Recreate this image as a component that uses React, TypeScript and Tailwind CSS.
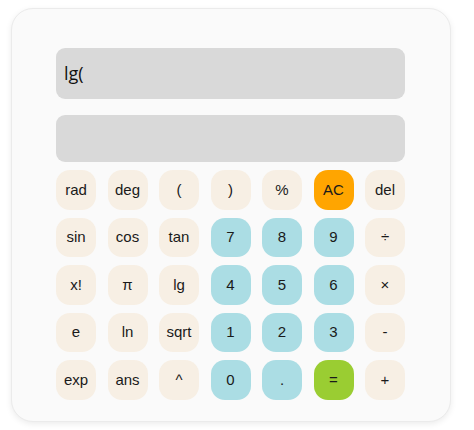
import React from 'react';

type Kind = 'fn' | 'num' | 'ac' | 'eq';

const KEYS: [string, Kind][] = [
  ['rad', 'fn'], ['deg', 'fn'], ['(', 'fn'], [')', 'fn'], ['%', 'fn'], ['AC', 'ac'], ['del', 'fn'],
  ['sin', 'fn'], ['cos', 'fn'], ['tan', 'fn'], ['7', 'num'], ['8', 'num'], ['9', 'num'], ['÷', 'fn'],
  ['x!', 'fn'], ['π', 'fn'], ['lg', 'fn'], ['4', 'num'], ['5', 'num'], ['6', 'num'], ['×', 'fn'],
  ['e', 'fn'], ['ln', 'fn'], ['sqrt', 'fn'], ['1', 'num'], ['2', 'num'], ['3', 'num'], ['-', 'fn'],
  ['exp', 'fn'], ['ans', 'fn'], ['^', 'fn'], ['0', 'num'], ['.', 'num'], ['=', 'eq'], ['+', 'fn'],
];

const KIND_CLASS: Record<Kind, string> = {
  fn: 'bg-[#f7efe4]',
  num: 'bg-[#abdde4]',
  ac: 'bg-[#ffa500]',
  eq: 'bg-[#9acd32]',
};

export default function App() {
  return (
    <div className="w-[474px] h-[430px] bg-white pt-2 pl-[11px]">
      <div className="w-[440px] h-[414px] rounded-[22px] bg-[#fafafa] border border-[#ebebeb] shadow-[0_2px_6px_rgba(0,0,0,0.08)] pt-[39px] pl-[44px]">
        <div className="w-[349px] flex flex-col">
          <div className="h-[51px] rounded-[9px] bg-[#d9d9d9] flex items-center px-2 text-[18px] text-[#111] font-['Open_Sans',sans-serif]">
            lg(
          </div>
          <div className="h-[47px] mt-4 rounded-[9px] bg-[#d9d9d9]" />
          <div className="grid grid-cols-7 gap-x-[11.5px] gap-y-[8px] mt-2">
            {KEYS.map(([label, kind]) => (
              <button
                key={label}
                className={`h-[39.5px] rounded-[14px] flex items-center justify-center text-[15px] text-[#1a1a1a] font-['Liberation_Sans',Arial,sans-serif] ${KIND_CLASS[kind]}`}
              >
                {label}
              </button>
            ))}
          </div>
        </div>
      </div>
    </div>
  );
}
